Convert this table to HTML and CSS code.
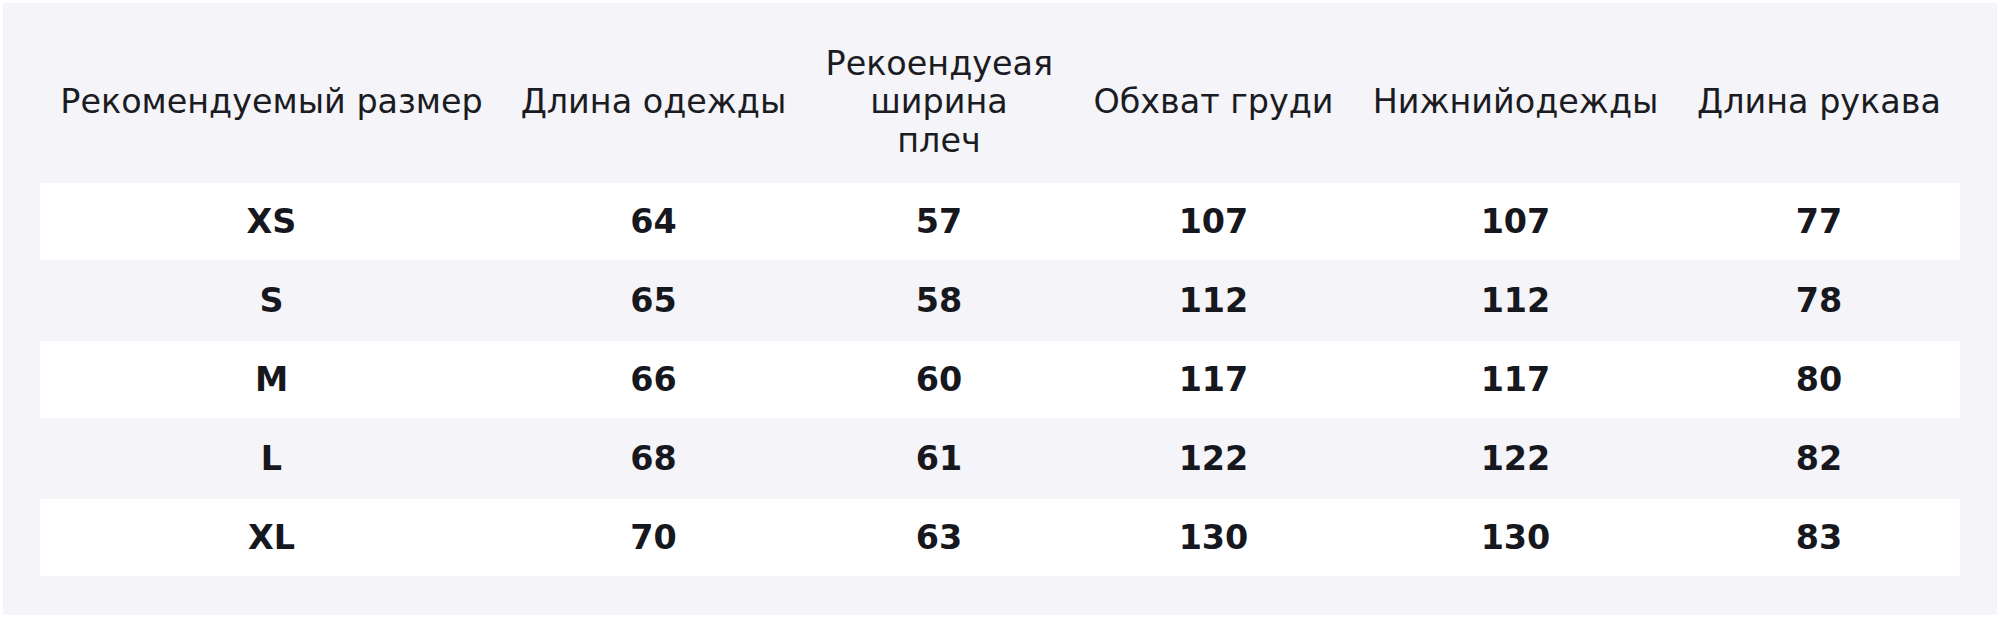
FILE: index.html
```html
<!DOCTYPE html>
<html lang="ru">
<head>
<meta charset="utf-8">
<title>Размеры</title>
<link rel="stylesheet" href="styles.css">
</head>
<body>
<div class="panel">
  <table class="sizes">
    <colgroup>
      <col class="c1"><col class="c2"><col class="c3"><col class="c4"><col class="c5"><col class="c6">
    </colgroup>
    <thead>
      <tr>
        <th>Рекомендуемый размер</th>
        <th>Длина одежды</th>
        <th class="narrow">Рекоендуеая ширина плеч</th>
        <th>Обхват груди</th>
        <th>Нижнийодежды</th>
        <th>Длина рукава</th>
      </tr>
    </thead>
    <tbody>
      <tr class="odd"><td>XS</td><td>64</td><td>57</td><td>107</td><td>107</td><td>77</td></tr>
      <tr><td>S</td><td>65</td><td>58</td><td>112</td><td>112</td><td>78</td></tr>
      <tr class="odd"><td>M</td><td>66</td><td>60</td><td>117</td><td>117</td><td>80</td></tr>
      <tr><td>L</td><td>68</td><td>61</td><td>122</td><td>122</td><td>82</td></tr>
      <tr class="odd"><td>XL</td><td>70</td><td>63</td><td>130</td><td>130</td><td>83</td></tr>
    </tbody>
  </table>
</div>
</body>
</html>
```
FILE: styles.css
```css
html, body {
  margin: 0;
  padding: 0;
  background: #ffffff;
}
body {
  font-family: "DejaVu Sans", sans-serif;
}
.panel {
  margin: 3px;
  padding: 19px 37px 37px;
  background: #f4f4f9;
}
.sizes {
  width: 100%;
  table-layout: fixed;
  border-collapse: separate;
  border-spacing: 0 2px;
}
.c1 { width: 463px; }
.c2 { width: 301px; }
.c3 { width: 270px; }
.c4 { width: 279px; }
.c5 { width: 325px; }
.c6 { width: 282px; }
.sizes th {
  font-weight: normal;
  font-size: 33.4px;
  line-height: 38.4px;
  padding: 21px 12px;
  color: #1b1b22;
  text-align: center;
  vertical-align: middle;
}
.sizes th.narrow {
  padding-left: 21.5px;
  padding-right: 21.5px;
}
.sizes td {
  font-weight: bold;
  font-size: 33.4px;
  line-height: 38px;
  padding: 19.5px 12px;
  color: #17171e;
  text-align: center;
  vertical-align: middle;
}
.sizes tr.odd td {
  background: #ffffff;
}
```
